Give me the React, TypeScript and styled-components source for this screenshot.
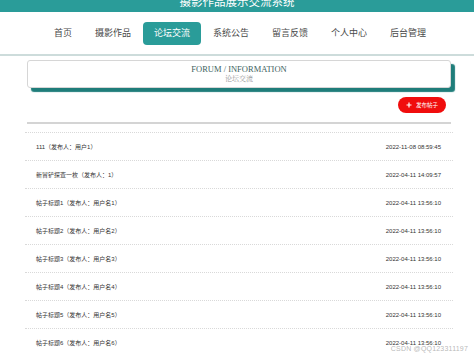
import React from "react";
import styled, { createGlobalStyle } from "styled-components";

const GlobalStyle = createGlobalStyle`
  html, body { margin: 0; padding: 0; background: #fff; }
  body { font-family: "Liberation Sans", "Noto Sans CJK SC", sans-serif; color: #333; }
`;

const TEAL = "#2a9c99";

const Page = styled.div`
  position: relative;
  width: 474px;
  height: 356px;
  overflow: hidden;
`;

const TopBar = styled.header`
  height: 12px;
  background: ${TEAL};
  display: flex;
  justify-content: center;
  align-items: flex-end;
  overflow: hidden;
`;

const SiteTitle = styled.h1`
  margin: 0 0 4px;
  font-size: 11.5px;
  line-height: 12px;
  font-weight: normal;
  color: #fff;
  white-space: nowrap;
`;

const Nav = styled.nav`
  height: 42px;
  display: flex;
  justify-content: center;
  align-items: center;
  gap: 1px;
  border-bottom: 2px solid #cddcdb;
  padding-left: 6px;
`;

const NavItem = styled.a<{ $active?: boolean }>`
  display: block;
  height: 23px;
  line-height: 23px;
  padding: 0 11px;
  font-size: 9px;
  border-radius: 4px;
  color: ${(p) => (p.$active ? "#fff" : "#4a4a4a")};
  background: ${(p) => (p.$active ? TEAL : "transparent")};
  text-decoration: none;
  white-space: nowrap;
`;

const Main = styled.main`
  margin: 0 23px 0 27px;
`;

const TitleCard = styled.div`
  margin-top: 4px;
  height: 28px;
  box-sizing: border-box;
  border: 1px solid #d6d6d6;
  border-radius: 3px;
  background: #fff;
  box-shadow: 4px 4px 1px #1f7d7a;
  display: flex;
  flex-direction: column;
  align-items: center;
  justify-content: center;
`;

const CardEn = styled.div`
  font-family: "Liberation Serif", "Noto Sans CJK SC", serif;
  font-size: 8.5px;
  line-height: 10px;
  color: #3e6361;
`;

const CardZh = styled.div`
  font-family: "Liberation Serif", "Noto Serif CJK SC", "Noto Sans CJK SC", serif;
  font-size: 7px;
  line-height: 10px;
  color: #999;
`;

const ActionBar = styled.div`
  margin-top: 9px;
  display: flex;
  justify-content: flex-end;
  padding-right: 5px;
`;

const AddButton = styled.button`
  height: 16px;
  width: 48px;
  border: none;
  border-radius: 8px;
  background: #f00d0d;
  color: #fff;
  display: flex;
  align-items: center;
  justify-content: center;
  gap: 4px;
  padding: 0;
  font-family: "Liberation Sans", "Noto Sans CJK SC", sans-serif;
  font-size: 5.5px;
  cursor: pointer;
`;

const Divider = styled.div`
  margin-top: 9px;
  height: 2px;
  background: #d4d4d4;
`;

const List = styled.ul`
  list-style: none;
  margin: 8px -2px 0;
  padding: 0;
`;

const Row = styled.li`
  height: 28px;
  box-sizing: border-box;
  border-top: 1px dotted #d9d9d9;
  display: flex;
  align-items: center;
  justify-content: space-between;
  padding: 0 12px 0 11px;
  font-size: 6px;
  color: #333;
`;

const Watermark = styled.div`
  position: absolute;
  right: 6px;
  bottom: 4px;
  font-size: 7px;
  color: rgba(160, 160, 160, 0.75);
  letter-spacing: 0.2px;
`;

const navItems = ["首页", "摄影作品", "论坛交流", "系统公告", "留言反馈", "个人中心", "后台管理"];

const posts = [
  { title: "111（发布人：用户1）", time: "2022-11-08 08:59:45" },
  { title: "新冒铲探查一枚（发布人：1）", time: "2022-04-11 14:09:57" },
  { title: "帖子标题1（发布人：用户名1）", time: "2022-04-11 13:56:10" },
  { title: "帖子标题2（发布人：用户名2）", time: "2022-04-11 13:56:10" },
  { title: "帖子标题3（发布人：用户名3）", time: "2022-04-11 13:56:10" },
  { title: "帖子标题4（发布人：用户名4）", time: "2022-04-11 13:56:10" },
  { title: "帖子标题5（发布人：用户名5）", time: "2022-04-11 13:56:10" },
  { title: "帖子标题6（发布人：用户名6）", time: "2022-04-11 13:56:10" },
];

export default function App() {
  return (
    <Page>
      <GlobalStyle />
      <TopBar>
        <SiteTitle>摄影作品展示交流系统</SiteTitle>
      </TopBar>
      <Nav>
        {navItems.map((n) => (
          <NavItem key={n} $active={n === "论坛交流"}>
            {n}
          </NavItem>
        ))}
      </Nav>
      <Main>
        <TitleCard>
          <CardEn>FORUM / INFORMATION</CardEn>
          <CardZh>论坛交流</CardZh>
        </TitleCard>
        <ActionBar>
          <AddButton>
            <svg width="6" height="6" viewBox="0 0 6 6">
              <path d="M3 0.5V5.5M0.5 3H5.5" stroke="#fff" strokeWidth="1.2" />
            </svg>
            <span>发布帖子</span>
          </AddButton>
        </ActionBar>
        <Divider />
        <List>
          {posts.map((p, i) => (
            <Row key={i}>
              <span>{p.title}</span>
              <span>{p.time}</span>
            </Row>
          ))}
        </List>
      </Main>
      <Watermark>CSDN @QQ123311197</Watermark>
    </Page>
  );
}
